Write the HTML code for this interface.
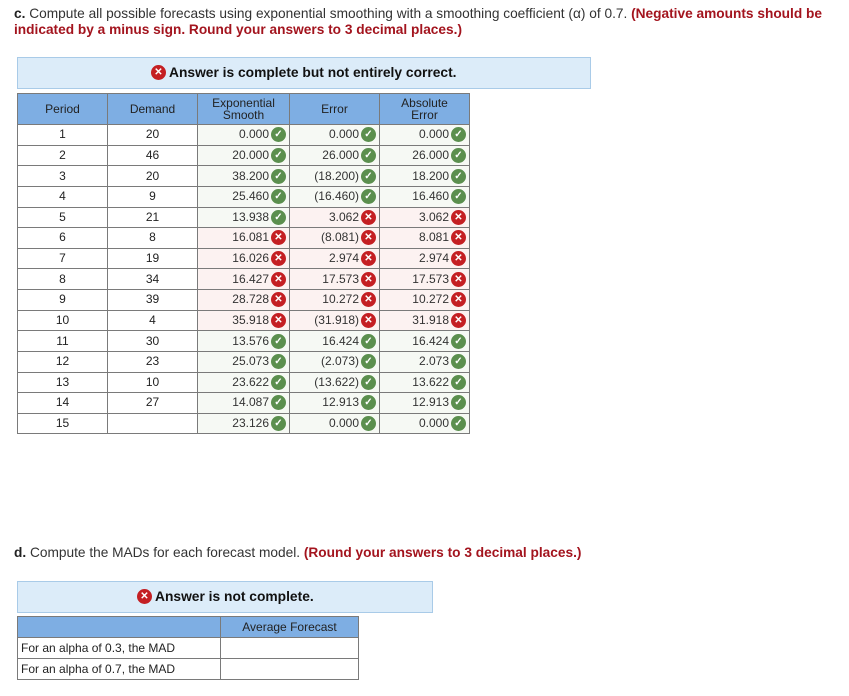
<!DOCTYPE html>
<html><head><meta charset="utf-8"><style>
body{margin:0;background:#fff;font-family:"Liberation Sans",Arial,sans-serif;color:#222;width:849px;height:696px;position:relative;overflow:hidden}
.q{position:absolute;left:14px;font-size:13.7px;color:#333;line-height:16px;white-space:nowrap}
.q b.l{color:#222}
.q .red{color:#a3141e;font-weight:bold}
.ban{position:absolute;left:17px;background:#dcecf9;border:1px solid #a9cbe8;box-sizing:border-box;font-weight:bold;font-size:13.8px;color:#111;}
.ban span.t{position:absolute;top:7px;white-space:nowrap;line-height:16px}
.x{display:inline-block;width:15px;height:15px;border-radius:50%;background:#c41f23;color:#fff;font-size:10px;font-weight:bold;text-align:center;line-height:15px;vertical-align:top;margin-right:3px}
table{position:absolute;border-collapse:collapse;font-size:12px;color:#222}
td,th{border:1px solid #7a7a7a;padding:0}
th{background:#7eaee3;font-weight:normal;line-height:12px;color:#222}
.m td{height:19.64px;text-align:center;vertical-align:middle;line-height:15px}
.m td.v{text-align:right;padding-right:3px;white-space:nowrap;color:#333}
td.g{background:#f6f9f4}td.r{background:#fcf2f1}
.i{display:inline-block;width:15px;height:15px;border-radius:50%;color:#fff;font-size:10px;font-weight:bold;text-align:center;line-height:15px;vertical-align:top;margin-left:2px}
.g .i{background:#5b8f4e}.r .i{background:#c41f23}
</style></head><body>
<div class="q" style="top:6px"><b class="l">c.</b> Compute all possible forecasts using exponential smoothing with a smoothing coefficient (α) of 0.7. <span class="red">(Negative amounts should be</span></div>
<div class="q" style="top:22px"><span class="red">indicated by a minus sign. Round your answers to 3 decimal places.)</span></div>
<div class="ban" style="top:57px;width:574px;height:32px"><span class="t" style="left:133px"><span class="x">✕</span>Answer is complete but not entirely correct.</span></div>
<table class="m" style="left:17px;top:93px;width:453px">
<tr><th style="width:89px;height:30px">Period</th><th style="width:89px">Demand</th><th style="width:91px">Exponential<br>Smooth</th><th style="width:89px">Error</th><th style="width:89px">Absolute<br>Error</th></tr>
<tr><td>1</td><td>20</td><td class="v g">0.000<span class="i">✓</span></td><td class="v g">0.000<span class="i">✓</span></td><td class="v g">0.000<span class="i">✓</span></td></tr>
<tr><td>2</td><td>46</td><td class="v g">20.000<span class="i">✓</span></td><td class="v g">26.000<span class="i">✓</span></td><td class="v g">26.000<span class="i">✓</span></td></tr>
<tr><td>3</td><td>20</td><td class="v g">38.200<span class="i">✓</span></td><td class="v g">(18.200)<span class="i">✓</span></td><td class="v g">18.200<span class="i">✓</span></td></tr>
<tr><td>4</td><td>9</td><td class="v g">25.460<span class="i">✓</span></td><td class="v g">(16.460)<span class="i">✓</span></td><td class="v g">16.460<span class="i">✓</span></td></tr>
<tr><td>5</td><td>21</td><td class="v g">13.938<span class="i">✓</span></td><td class="v r">3.062<span class="i">✕</span></td><td class="v r">3.062<span class="i">✕</span></td></tr>
<tr><td>6</td><td>8</td><td class="v r">16.081<span class="i">✕</span></td><td class="v r">(8.081)<span class="i">✕</span></td><td class="v r">8.081<span class="i">✕</span></td></tr>
<tr><td>7</td><td>19</td><td class="v r">16.026<span class="i">✕</span></td><td class="v r">2.974<span class="i">✕</span></td><td class="v r">2.974<span class="i">✕</span></td></tr>
<tr><td>8</td><td>34</td><td class="v r">16.427<span class="i">✕</span></td><td class="v r">17.573<span class="i">✕</span></td><td class="v r">17.573<span class="i">✕</span></td></tr>
<tr><td>9</td><td>39</td><td class="v r">28.728<span class="i">✕</span></td><td class="v r">10.272<span class="i">✕</span></td><td class="v r">10.272<span class="i">✕</span></td></tr>
<tr><td>10</td><td>4</td><td class="v r">35.918<span class="i">✕</span></td><td class="v r">(31.918)<span class="i">✕</span></td><td class="v r">31.918<span class="i">✕</span></td></tr>
<tr><td>11</td><td>30</td><td class="v g">13.576<span class="i">✓</span></td><td class="v g">16.424<span class="i">✓</span></td><td class="v g">16.424<span class="i">✓</span></td></tr>
<tr><td>12</td><td>23</td><td class="v g">25.073<span class="i">✓</span></td><td class="v g">(2.073)<span class="i">✓</span></td><td class="v g">2.073<span class="i">✓</span></td></tr>
<tr><td>13</td><td>10</td><td class="v g">23.622<span class="i">✓</span></td><td class="v g">(13.622)<span class="i">✓</span></td><td class="v g">13.622<span class="i">✓</span></td></tr>
<tr><td>14</td><td>27</td><td class="v g">14.087<span class="i">✓</span></td><td class="v g">12.913<span class="i">✓</span></td><td class="v g">12.913<span class="i">✓</span></td></tr>
<tr><td>15</td><td></td><td class="v g">23.126<span class="i">✓</span></td><td class="v g">0.000<span class="i">✓</span></td><td class="v g">0.000<span class="i">✓</span></td></tr>
</table>
<div class="q" style="top:545px"><b class="l">d.</b> Compute the MADs for each forecast model. <span class="red">(Round your answers to 3 decimal places.)</span></div>
<div class="ban" style="top:581px;width:416px;height:32px"><span class="t" style="left:119px"><span class="x">✕</span>Answer is not complete.</span></div>
<table style="left:17px;top:616px;width:342px">
<tr><th style="width:202px;height:20px"></th><th style="text-align:center">Average Forecast</th></tr>
<tr><td style="height:20px;padding-left:3px">For an alpha of 0.3, the MAD</td><td></td></tr>
<tr><td style="height:20px;padding-left:3px">For an alpha of 0.7, the MAD</td><td></td></tr>
</table>
</body></html>
